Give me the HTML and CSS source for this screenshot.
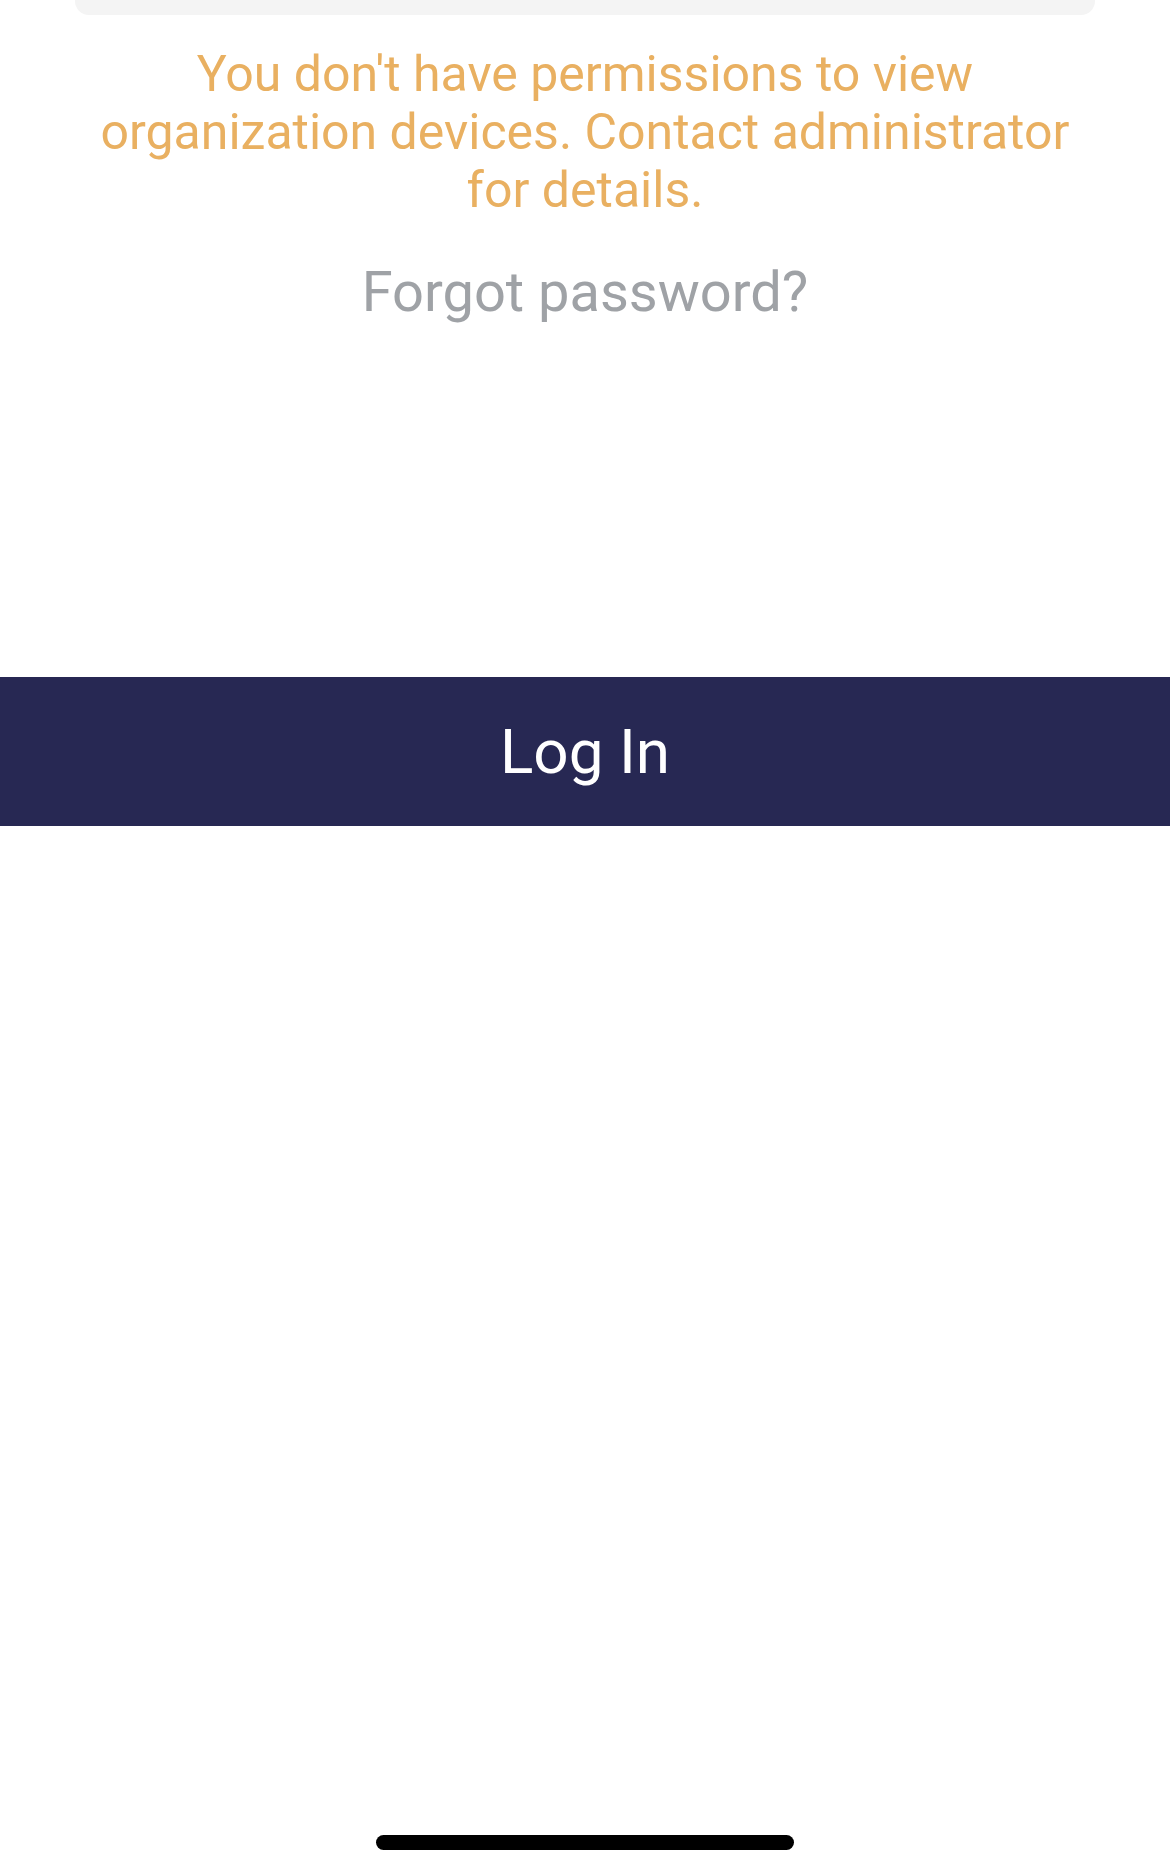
FILE: index.html
```html
<!DOCTYPE html>
<html lang="en">
<head>
<meta charset="utf-8">
<title>Log In</title>
<link rel="stylesheet" href="styles.css">
</head>
<body>
<div class="screen">
  <div class="field-stub"></div>
  <p class="notice">You don't have permissions to view organization devices. Contact administrator for details.</p>
  <a class="forgot" href="#">Forgot password?</a>
  <button class="login" type="button">Log In</button>
  <div class="spacer"></div>
  <div class="home-indicator"></div>
</div>
</body>
</html>
```

FILE: styles.css
```css
html, body {
  margin: 0;
  padding: 0;
  background: #ffffff;
}

.screen {
  display: flex;
  flex-direction: column;
  align-items: center;
  min-height: 1874px;
  font-family: Roboto, "Liberation Sans", sans-serif;
}

.field-stub {
  align-self: stretch;
  height: 15px;
  margin: 0 75px;
  background: #f4f4f4;
  border-radius: 0 0 14px 14px;
}

.notice {
  margin: 30px 80px 0;
  font-size: 50px;
  line-height: 58px;
  color: #e9b061;
  text-align: center;
}

.forgot {
  margin-top: 40px;
  font-size: 56px;
  line-height: 66px;
  color: #9fa2a6;
  text-decoration: none;
}

.login {
  align-self: stretch;
  margin-top: 352px;
  height: 149px;
  border: 0;
  padding: 0;
  background: #272853;
  color: #ffffff;
  font-family: Roboto, "Liberation Sans", sans-serif;
  font-size: 62px;
  display: flex;
  align-items: center;
  justify-content: center;
}

.spacer {
  flex: 1;
}

.home-indicator {
  width: 418px;
  height: 15px;
  margin-bottom: 24px;
  border-radius: 8px;
  background: #000000;
}
```
